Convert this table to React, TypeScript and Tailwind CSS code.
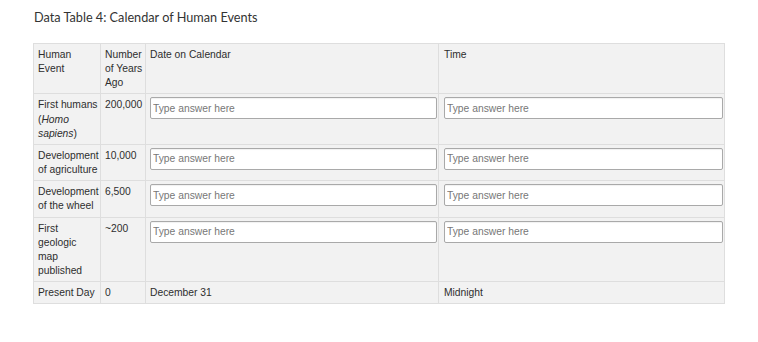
import React from 'react';

type Row = {
  event: React.ReactNode;
  years: string;
  date?: string;
  time?: string;
};

const ROWS: Row[] = [
  {
    event: (
      <>
        First humans (<em>Homo sapiens</em>)
      </>
    ),
    years: '200,000',
  },
  { event: 'Development of agriculture', years: '10,000' },
  { event: 'Development of the wheel', years: '6,500' },
  {
    event: (
      <>
        First
        <br />
        geologic
        <br />
        map
        <br />
        published
      </>
    ),
    years: '~200',
  },
  { event: 'Present Day', years: '0', date: 'December 31', time: 'Midnight' },
];

const cell = 'border border-[#dedede] align-top pl-[4px] pr-0 pt-[4px] pb-[3px] leading-[14.15px]';

function AnswerInput() {
  return (
    <input
      type="text"
      placeholder="Type answer here"
      className="block h-[22px] w-[calc(100%-1px)] -mt-[1px] rounded-[2px] border border-[#a9a9a9] bg-white px-[2px] text-[10.3px] text-[#333] placeholder:text-[#777] outline-none shadow-[inset_0_1px_1px_rgba(0,0,0,0.06)]"
      style={{ fontFamily: '"Liberation Sans", Arial, sans-serif' }}
    />
  );
}

export default function App() {
  return (
    <div className="w-[758px] h-[342px] bg-white overflow-hidden pl-[33px] pt-[7px]">
      <h2
        className="text-[12.7px] leading-[20px] text-[#333] pl-px"
        style={{ fontFamily: 'Lato, "Open Sans", sans-serif' }}
      >
        Data Table 4: Calendar of Human Events
      </h2>

      <table
        className="mt-[16px] w-[691px] table-fixed border-collapse bg-[#f2f2f2] text-[10.3px] text-[#2e2e2e]"
        style={{ fontFamily: '"Liberation Sans", Arial, sans-serif' }}
      >
        <colgroup>
          <col className="w-[67px]" />
          <col className="w-[45px]" />
          <col className="w-[293px]" />
          <col className="w-[286px]" />
        </colgroup>
        <thead>
          <tr>
            <th className={`${cell} text-left font-normal`}>Human Event</th>
            <th className={`${cell} text-left font-normal`}>Number of Years Ago</th>
            <th className={`${cell} text-left font-normal`}>Date on Calendar</th>
            <th className={`${cell} text-left font-normal pl-[5px]`}>Time</th>
          </tr>
        </thead>
        <tbody>
          {ROWS.map((row, i) => (
            <tr key={i}>
              <td className={cell}>{row.event}</td>
              <td className={cell}>{row.years}</td>
              <td className={cell}>{row.date ?? <AnswerInput />}</td>
              <td className={`${cell} pl-[5px]`}>{row.time ?? <AnswerInput />}</td>
            </tr>
          ))}
        </tbody>
      </table>
    </div>
  );
}
